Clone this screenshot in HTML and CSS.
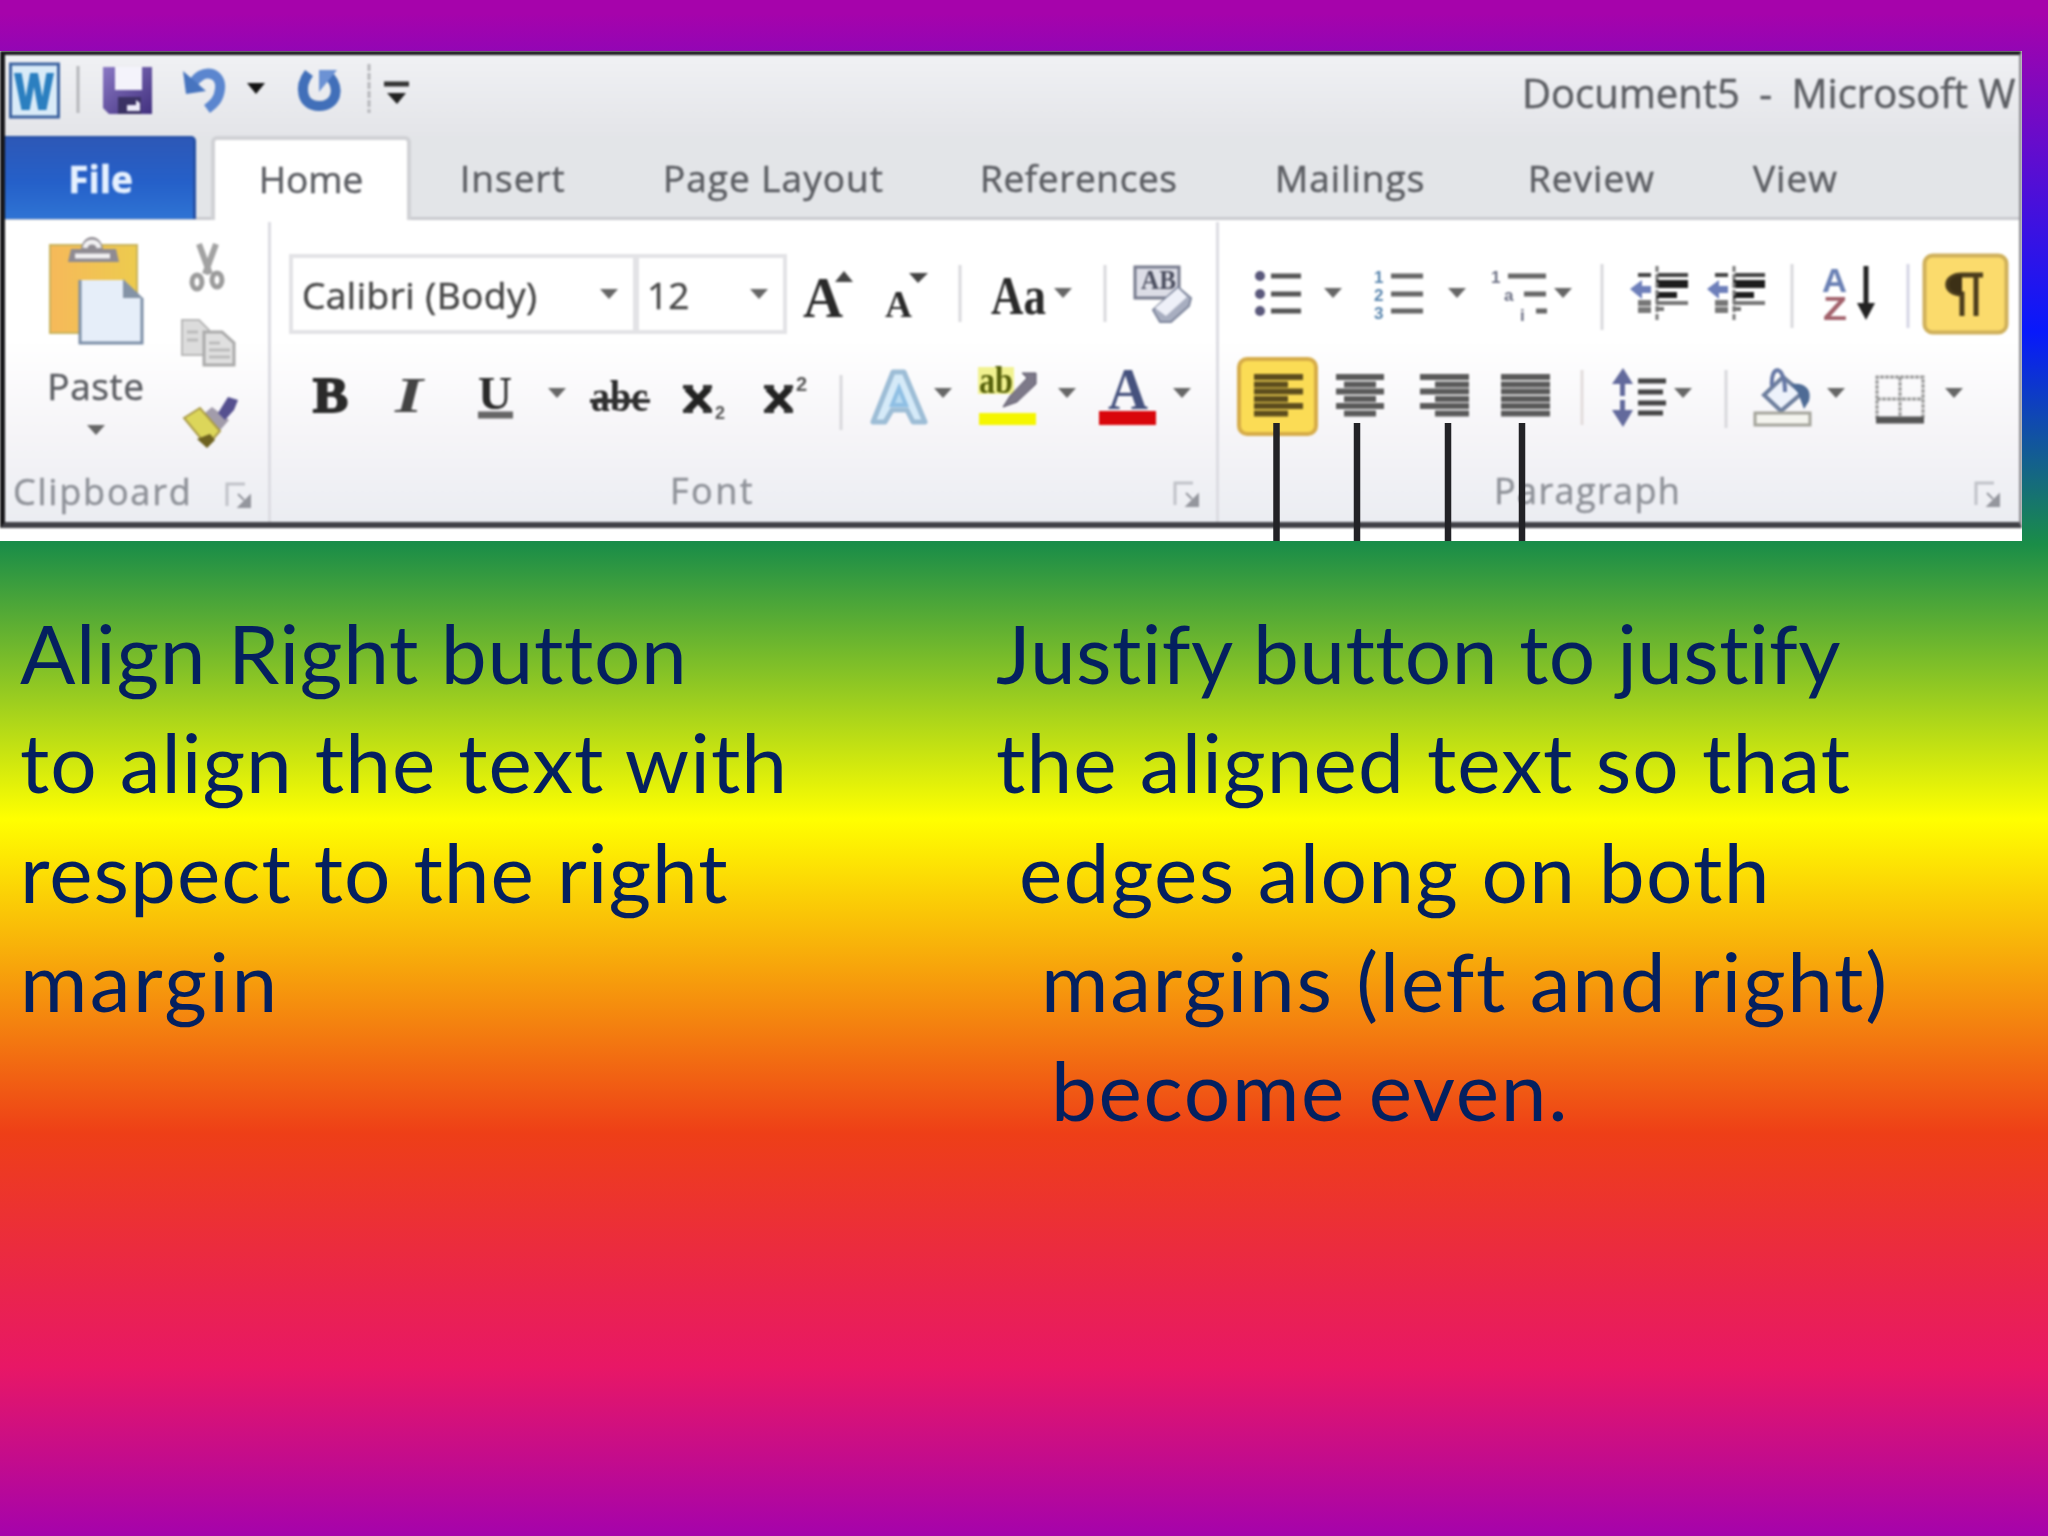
FILE: index.html
```html
<!DOCTYPE html>
<html lang="en">
<head>
<meta charset="utf-8">
<title>Paragraph alignment buttons</title>
<link rel="stylesheet" href="styles.css">
</head>
<body>
<svg class="defs" width="0" height="0" aria-hidden="true">
  <defs>
    <symbol id="arrow" viewBox="0 0 20 90"><path d="M1 38H19L10 48Z" fill="#666"/></symbol>
    <symbol id="launcher" viewBox="0 0 28 26"><path d="M2 24V2H20" fill="none" stroke="#c0c2c8" stroke-width="3"/><path d="M13 12L19 18M25 14V25H14Z" fill="#94969d" stroke="#94969d" stroke-width="2"/></symbol>
    <linearGradient id="gold" x1="0" y1="0" x2="1" y2="0"><stop offset="0" stop-color="#f6b95a"/><stop offset="1" stop-color="#edcb4e"/></linearGradient>
    <linearGradient id="violet" x1="0" y1="0" x2="1" y2="1"><stop offset="0" stop-color="#8a78c4"/><stop offset="1" stop-color="#41307e"/></linearGradient>
  </defs>
</svg>
<main class="slide">
  <section class="shot">
    <div class="window">
      <header class="titlebar">
        <div class="quick">
          <svg width="52" height="80" viewBox="9 55 52 80"><rect x="10.500" y="64" width="48" height="53" fill="#d9ebf8" stroke="#3b629f" stroke-width="3"/><text x="34" y="109" class="wlogo" text-anchor="middle" textLength="38" lengthAdjust="spacingAndGlyphs">W</text></svg>
          <svg width="4" height="80" viewBox="76 55 4 80"><path d="M78 66V113" stroke="#b5b6ba" stroke-width="3"/></svg>
          <svg width="50" height="80" viewBox="103 55 50 80"><path d="M103 67H152V114H109L103 108Z" fill="url(#violet)"/><rect x="115" y="67" width="27" height="23" fill="#f4f3fb"/><rect x="118" y="97" width="23" height="17" fill="#3b3264"/><path d="M127 111V105H136V100L140 103V111Z" fill="#eceaf8"/></svg>
          <svg width="44" height="80" viewBox="183 55 44 80"><path d="M193 84C201 68 222 71 220 89C219 99 214 104 207 109" fill="none" stroke="#5b86cf" stroke-width="10"/><path d="M183 71L186 94L206 91Z" fill="#4774bf"/></svg>
          <svg width="20" height="80" viewBox="246 55 20 80"><path d="M247 83H265L256 94Z" fill="#141414"/></svg>
          <svg width="44" height="80" viewBox="298 55 44 80"><path d="M309 73C299 86 301 106 319 106C337 106 340 88 330 77" fill="none" stroke="#416fb9" stroke-width="10"/><path d="M319 92V70H337Z" fill="#6c92d4"/></svg>
          <svg width="4" height="80" viewBox="367 55 4 80"><path d="M369 64V113" stroke="#b5b6ba" stroke-width="3" stroke-dasharray="7 2"/></svg>
          <svg width="26" height="80" viewBox="384 55 26 80"><path d="M384 84H409" stroke="#333" stroke-width="5"/><path d="M387 93H406L397 104Z" fill="#222"/></svg>
        </div>
        <div class="title">Document5 <span class="dash">-</span> Microsoft W</div>
      </header>
      <nav class="tabs">
        <div class="file"><span>File</span></div>
        <div class="home"><span>Home</span></div>
        <div class="others">
          <span>Insert</span><span>Page Layout</span><span class="t-ref">References</span><span>Mailings</span><span>Review</span><span>View</span>
        </div>
      </nav>
      <div class="ribbon">
        <section class="group clipboard">
          <div class="clip-body">
            <div class="paste">
              <svg width="96" height="112" viewBox="48 236 96 112"><path d="M50 245H137V333H50Z" fill="url(#gold)" stroke="#c9b45e" stroke-width="2"/><path d="M68 262L71 249H81C83 233 101 233 103 249H116L119 262Z" fill="#8f8b92"/><path d="M75 256H110M85 248C86 240 98 240 99 248" fill="none" stroke="#f1f0f2" stroke-width="5"/><path d="M80 280H124L141 298V343H80Z" fill="#e6eef9"/><path d="M80 280V343H142V298" fill="none" stroke="#7d8fa8" stroke-width="3"/><path d="M123 279V298H143Z" fill="#8493a6"/></svg>
              <span class="paste-text">Paste</span>
              <svg width="20" height="12" viewBox="0 36 20 12"><use href="#arrow" width="20" height="90"/></svg>
            </div>
            <div class="clip-tools">
              <svg width="60" height="52" viewBox="180 242 60 52"><path d="M199 244L210 274M216 244L205 274" stroke="#a2a2a2" stroke-width="6"/><ellipse cx="197" cy="282" rx="5" ry="7" fill="none" stroke="#9b9b9b" stroke-width="5"/><ellipse cx="217" cy="280" rx="5" ry="7" fill="none" stroke="#9b9b9b" stroke-width="5"/></svg>
              <svg width="60" height="52" viewBox="180 317 60 52"><path d="M182 320H199L209 330V355H182Z" fill="#dcdcdc" stroke="#b8b8b8" stroke-width="2"/><path d="M204 332H222L234 343V365H204Z" fill="#e0e0e0" stroke="#aaa" stroke-width="3"/><path d="M209 343H220M209 350H230M209 357H230M187 332H198M187 340H198" stroke="#bbb" stroke-width="3"/></svg>
              <svg width="60" height="58" viewBox="180 393 60 58"><path d="M212 407L229 420L216 435L199 418Z" fill="#a29cab"/><path d="M218 413L228 397L238 400L234 410L225 420Z" fill="#55508f"/><path d="M184 418L200 408L220 431L207 446Z" fill="#dcd65a" stroke="#aa9b48" stroke-width="2"/><path d="M197 439L210 434L215 440L207 448Z" fill="#6e6220"/></svg>
            </div>
          </div>
          <footer class="label"><span class="l-clip">Clipboard</span><svg width="28" height="26"><use href="#launcher"/></svg></footer>
        </section>

        <section class="group font">
          <div class="row font-row1">
            <div class="combos">
              <div class="combo name"><span>Calibri (Body)</span><svg width="20" height="70" viewBox="0 8 20 70"><use href="#arrow" width="20" height="90"/></svg></div>
              <div class="combo size"><span>12</span><svg width="20" height="70" viewBox="0 8 20 70"><use href="#arrow" width="20" height="90"/></svg></div>
            </div>
            <svg width="52" height="90" viewBox="803 250 52 90"><text x="803" y="317" class="ser" font-size="57" textLength="40" lengthAdjust="spacingAndGlyphs">A</text><path d="M835 282L844 271L853 282Z" fill="#444"/></svg>
            <svg width="46" height="90" viewBox="885 250 46 90"><text x="885" y="317" class="ser" font-size="38" textLength="27" lengthAdjust="spacingAndGlyphs">A</text><path d="M909 273H928L918 283Z" fill="#444"/></svg>
            <svg width="4" height="90" viewBox="958 250 4 90"><path d="M960 265V322" stroke="#d8d8dc" stroke-width="3"/></svg>
            <svg width="56" height="90" viewBox="991 250 56 90"><text x="991" y="314" class="ser" font-size="54" textLength="55" lengthAdjust="spacingAndGlyphs">Aa</text></svg>
            <svg width="20" height="90"><use href="#arrow"/></svg>
            <svg width="4" height="90" viewBox="1103 250 4 90"><path d="M1105 265V322" stroke="#d8d8dc" stroke-width="3"/></svg>
            <svg width="60" height="90" viewBox="1133 250 60 90"><path d="M1135 267H1179V298H1135Z" fill="#dcdde6" stroke="#777b8d" stroke-width="3"/><text x="1141" y="289" class="ser eb" font-size="27" textLength="35" lengthAdjust="spacingAndGlyphs">AB</text><path d="M1153 310L1178 287L1191 298L1189 306L1171 322H1160Z" fill="#a8aec0" stroke="#7e869c" stroke-width="2"/><path d="M1155 308L1178 288L1187 297L1166 316Z" fill="#eef0f8"/></svg>
          </div>
          <div class="row font-row2">
            <svg width="36" height="90" viewBox="313 350 36 90"><text x="313" y="412" class="ser heavy" font-size="50" textLength="35" lengthAdjust="spacingAndGlyphs">B</text></svg>
            <svg width="36" height="90" viewBox="394 350 36 90"><text x="395" y="412" class="ser it" font-size="50" textLength="28" lengthAdjust="spacingAndGlyphs">I</text></svg>
            <svg width="36" height="90" viewBox="478 350 36 90"><text x="478" y="409" class="ser" font-size="46" textLength="34" lengthAdjust="spacingAndGlyphs">U</text><path d="M478 415H513" stroke="#666" stroke-width="7"/></svg>
            <svg width="20" height="90"><use href="#arrow"/></svg>
            <svg width="60" height="90" viewBox="590 350 60 90"><text x="591" y="411" class="ser" font-size="44" textLength="57" lengthAdjust="spacingAndGlyphs">abc</text><path d="M590 401H650" stroke="#333" stroke-width="4"/></svg>
            <svg width="46" height="90" viewBox="683 350 46 90"><path d="M687 388L709 411M709 388L687 411" stroke="#222" stroke-width="7"/><path d="M683 387H693M703 387H712M683 411H693M703 411H712" stroke="#333" stroke-width="4"/><text x="715" y="419" class="san" font-size="18">2</text></svg>
            <svg width="50" height="90" viewBox="763 350 50 90"><path d="M768 388L790 411M790 388L768 411" stroke="#222" stroke-width="7"/><path d="M764 387H774M784 387H793M764 411H774M784 411H793" stroke="#333" stroke-width="4"/><text x="796" y="391" class="san" font-size="20">2</text></svg>
            <svg width="4" height="90" viewBox="839 350 4 90"><path d="M841 375V430" stroke="#d8d8dc" stroke-width="3"/></svg>
            <svg width="56" height="90" viewBox="871 350 56 90"><path d="M873 422L893 372H904L925 422H913L907 410H892L885 422Z" fill="#d5eaf8" stroke="#9dbdd6" stroke-width="5" stroke-linejoin="round"/><path d="M899 388L906 405H892Z" fill="#b9dbf2" stroke="#8fbfe4" stroke-width="4"/></svg>
            <svg width="20" height="90"><use href="#arrow"/></svg>
            <svg width="60" height="90" viewBox="978 350 60 90"><path d="M978 367H1014V394H978Z" fill="#f1f290"/><text x="979" y="393" class="ser hl" font-size="37" textLength="34" lengthAdjust="spacingAndGlyphs">ab</text><path d="M1003 407L1010 396L1027 378L1022 373H1036V384L1017 402Z" fill="#7d7989" stroke="#555063" stroke-width="1"/><rect x="979" y="413" width="57" height="12" fill="#f5f600"/></svg>
            <svg width="20" height="90"><use href="#arrow"/></svg>
            <svg width="60" height="90" viewBox="1098 350 60 90"><text x="1108" y="409" class="ser fc" font-size="60" textLength="40" lengthAdjust="spacingAndGlyphs">A</text><rect x="1099" y="411" width="57" height="14" fill="#d9060b"/></svg>
            <svg width="20" height="90"><use href="#arrow"/></svg>
          </div>
          <footer class="label"><span class="l-font">Font</span><svg width="28" height="26"><use href="#launcher"/></svg></footer>
        </section>

        <section class="group para">
          <div class="row para-row1">
            <svg width="48" height="90" viewBox="1254 250 48 90"><g fill="#5a587b"><circle cx="1260" cy="276" r="5"/><circle cx="1260" cy="294" r="5"/><circle cx="1260" cy="311" r="5"/></g><path d="M1271 276H1301M1271 294H1301M1271 311H1301" stroke="#555" stroke-width="5"/></svg>
            <svg width="20" height="90"><use href="#arrow"/></svg>
            <svg width="54" height="90" viewBox="1371 250 54 90"><g class="num"><text x="1374" y="283">1</text><text x="1374" y="301">2</text><text x="1374" y="319">3</text></g><path d="M1391 276H1423M1391 294H1423M1391 311H1423" stroke="#666" stroke-width="5"/></svg>
            <svg width="20" height="90"><use href="#arrow"/></svg>
            <svg width="58" height="90" viewBox="1490 250 58 90"><g class="num dim"><text x="1491" y="283">1</text><text x="1504" y="301">a</text><text x="1520" y="321">i</text></g><path d="M1508 276H1546M1524 294H1546M1536 311H1547" stroke="#666" stroke-width="5"/></svg>
            <svg width="20" height="90"><use href="#arrow"/></svg>
            <svg width="4" height="90" viewBox="1600 250 4 90"><path d="M1602 264V330" stroke="#d8d8dc" stroke-width="3"/></svg>
            <svg width="60" height="90" viewBox="1630 250 60 90"><g id="dent"><path d="M1630 289L1642 280V286H1651V293H1642V299Z" fill="#6e7fba"/><path d="M1638 275H1651M1658 275H1688" stroke="#444" stroke-width="4"/><path d="M1656 284H1688" stroke="#1d1d1d" stroke-width="8"/><path d="M1656 295H1677" stroke="#1d1d1d" stroke-width="6"/><path d="M1656 303H1688M1656 309H1664" stroke="#777" stroke-width="4"/><path d="M1638 303H1651M1638 310H1651" stroke="#777" stroke-width="6"/><path d="M1657 266V321" stroke="#777" stroke-width="3" stroke-dasharray="6 2"/></g></svg>
            <svg width="60" height="90" viewBox="1630 250 60 90"><use href="#dent"/></svg>
            <svg width="4" height="90" viewBox="1790 250 4 90"><path d="M1792 264V328" stroke="#d8d8dc" stroke-width="3"/></svg>
            <svg width="54" height="90" viewBox="1822 250 54 90"><text x="1822" y="292" class="san az" font-size="33" textLength="25" lengthAdjust="spacingAndGlyphs">A</text><text x="1823" y="320" class="san za" font-size="33" textLength="24" lengthAdjust="spacingAndGlyphs">Z</text><path d="M1866 266V305" stroke="#222" stroke-width="5"/><path d="M1857 303H1875L1866 320Z" fill="#222"/></svg>
            <svg width="4" height="90" viewBox="1906 250 4 90"><path d="M1908 264V328" stroke="#d5d5e4" stroke-width="3"/></svg>
            <svg width="88" height="90" viewBox="1922 250 88 90"><rect x="1924.500" y="255.500" width="82" height="77" rx="8" fill="#fbdb6c" stroke="#cfb05a" stroke-width="4"/><path d="M1983 275H1962C1943 275 1943 294 1962 294V316M1976 275V316" fill="none" stroke="#4b3d1c" stroke-width="5"/><path d="M1962 275C1945 275 1945 294 1962 294Z" fill="#3c3016"/></svg>
          </div>
          <div class="row para-row2">
            <svg width="82" height="90" viewBox="1237 350 82 90"><rect x="1239" y="359" width="77" height="75" rx="8" fill="#fbdc55" stroke="#d6ac48" stroke-width="4"/><path d="M1254 377H1303M1254 384.500H1288M1254 391.500H1303M1254 399H1288M1254 406H1303M1254 413.500H1288" stroke="#5d4d1d" stroke-width="5.800"/></svg>
            <svg width="52" height="90" viewBox="1335 350 52 90"><path d="M1336 377H1384M1344 384.500H1376M1336 391.500H1384M1344 399H1376M1336 406H1384M1344 413.500H1376" stroke="#5a5a5a" stroke-width="5.800"/></svg>
            <svg width="52" height="90" viewBox="1420 350 52 90"><path d="M1420 377H1469M1435 384.500H1469M1420 391.500H1469M1435 399H1469M1420 406H1469M1435 413.500H1469" stroke="#5a5a5a" stroke-width="5.800"/></svg>
            <svg width="52" height="90" viewBox="1500 350 52 90"><path d="M1501 377H1550M1501 384.500H1550M1501 391.500H1550M1501 399H1550M1501 406H1550M1501 413.500H1550" stroke="#5a5a5a" stroke-width="5.800"/></svg>
            <svg width="4" height="90" viewBox="1580 350 4 90"><path d="M1582 370V425" stroke="#e2dcdc" stroke-width="3"/></svg>
            <svg width="58" height="90" viewBox="1611 350 58 90"><path d="M1623 368L1633 384H1625V396H1620V384H1612ZM1623 427L1612 410H1620V400H1625V410H1633Z" fill="#636a9c"/><path d="M1638 381H1666M1638 392H1663M1638 403H1666M1638 413H1663" stroke="#444" stroke-width="5"/></svg>
            <svg width="20" height="90"><use href="#arrow"/></svg>
            <svg width="4" height="90" viewBox="1724 350 4 90"><path d="M1726 370V428" stroke="#d8d8dc" stroke-width="3"/></svg>
            <svg width="60" height="90" viewBox="1753 350 60 90"><path d="M1764 395L1783 377L1802 393L1781 411Z" fill="#edf2fb" stroke="#6d7e9d" stroke-width="4"/><path d="M1772 386C1770 365 1785 363 1785 392" fill="none" stroke="#6678a5" stroke-width="4"/><path d="M1791 384C1806 382 1812 390 1809 401L1804 409L1798 393Z" fill="#4e6b95"/><rect x="1755" y="413" width="55" height="12" fill="#f4f4ee" stroke="#a4a49b" stroke-width="3"/></svg>
            <svg width="20" height="90"><use href="#arrow"/></svg>
            <svg width="50" height="90" viewBox="1875 350 50 90"><path d="M1877 419V377H1923V419M1900 377V419M1877 399H1923" fill="none" stroke="#999" stroke-width="3" stroke-dasharray="4 1"/><path d="M1876 420H1924" stroke="#555" stroke-width="7"/></svg>
            <svg width="20" height="90"><use href="#arrow"/></svg>
          </div>
          <footer class="label"><span class="l-para">Paragraph</span><svg width="28" height="26"><use href="#launcher"/></svg></footer>
        </section>
      </div>
    </div>
    <svg class="callouts" width="260" height="118" viewBox="1270 423 260 118"><path d="M1276.500 423V541M1357 423V541M1448 423V541M1522 423V541" stroke="#222226" stroke-width="6.500"/></svg>
  </section>

  <section class="notes">
    <p class="left">
      <span class="l1">Align Right button</span>
      <span class="l2">to align the text with</span>
      <span class="l3">respect to the right</span>
      <span class="l4">margin</span>
    </p>
    <p class="right">
      <span class="r1">Justify button to justify</span>
      <span class="r2">the aligned text so that</span>
      <span class="r3">edges along on both</span>
      <span class="r4">margins (left and right)</span>
      <span class="r5">become even.</span>
    </p>
  </section>
</main>
</body>
</html>
```
FILE: styles.css
```css
* { box-sizing: border-box; }
body { margin: 0; }
.defs { position: absolute; }
svg { display: block; overflow: visible; }

.slide {
  width: 2048px;
  height: 1536px;
  overflow: hidden;
  padding-top: 51px;
  background: linear-gradient(#a603ab 14px, #0819fb 332px, #1a8d48 544px, #ff0 819px, #ee3f17 1133px, #e81766 1367px, #a603ab 1534px);
}

/* Ribbon picture */
.shot {
  position: relative;
  width: 2022px;
  height: 490px;
  overflow: hidden;
  background: #fff;
  font-family: "Open Sans", "Noto Sans", sans-serif;
  color: #5c5e63;
  -webkit-text-stroke: 0.5px;
}
.window {
  height: 477px;
  border: solid #17171a;
  border-width: 4px 3px 6px 5px;
  border-right-color: #929297;
  border-bottom-color: #404046;
  background: #fff;
  filter: blur(1.1px);
}
.titlebar {
  display: flex;
  justify-content: space-between;
  height: 81px;
  background: linear-gradient(#f0f1f4, #e4e5e9);
}
.quick {
  display: grid;
  grid-template-columns: 67px 27px 80px 63px 52px 69px 17px 26px;
  padding-left: 4px;
}
.wlogo { font: bold 50px "Liberation Sans", sans-serif; fill: #2b7fc0; stroke: #2b7fc0; stroke-width: 2px; }
.title {
  width: 497px;
  overflow: hidden;
  white-space: pre;
  font-size: 40px;
  line-height: 75px;
}
.dash { margin: 0 9px; }

.tabs {
  display: flex;
  height: 84px;
  font-size: 37px;
  line-height: 84px;
  background: #e3e5e8;
  box-shadow: inset 0 -3px #c9cacf;
}
.file {
  width: 191px;
  height: 83px;
  padding-left: 3px;
  text-align: center;
  font-weight: bold;
  color: #e6f1ff;
  border: solid #2450a5;
  border-width: 2px 3px 0 0;
  line-height: 82px;
  background: linear-gradient(#2d58b7, #2560c9 55%, #2f74d4);
  border-radius: 0 5px 0 0;
}
.home {
  width: 200px;
  margin-left: 15px;
  text-align: center;
  background: #fff;
  border: 4px solid #d0d1d5;
  border-bottom: 0;
  border-radius: 6px 6px 0 0;
  line-height: 78px;
}
.others {
  display: grid;
  grid-template-columns: 203px 317px 295px 253px 225px 100px;
  padding-left: 49px;
  white-space: nowrap;
  letter-spacing: 1px;
}
.t-ref { letter-spacing: 0.6px; }

.ribbon {
  display: grid;
  grid-template-columns: 266px 948px 1fr;
  height: 302px;
  padding-top: 2px;
  background: linear-gradient(#fff 0, #fff 40%, #f6f5f8 70%, #ebedf2 100%);
}
.group { display: flex; flex-direction: column; justify-content: space-between; }
.clipboard, .font { border-right: 3px solid #dcdce2; }
.label {
  display: flex;
  align-items: center;
  height: 60px;
  font-size: 36px;
  line-height: 60px;
  color: #8f9299;
}
.label svg { margin-top: 5px; }
.clipboard .label { padding: 0 15px 0 8px; justify-content: space-between; }
.font .label { padding: 0 15px 0 399px; justify-content: space-between; }
.para .label { padding: 0 17px 0 275px; justify-content: space-between; }
.l-clip { letter-spacing: 1.8px; }
.l-font { letter-spacing: 2.5px; }
.l-para { letter-spacing: 1.4px; }

.clip-body { display: flex; padding: 14px 0 0 43px; }
.paste { display: flex; flex-direction: column; align-items: center; width: 96px; }
.paste-text { font-size: 37px; line-height: 54px; margin: 11px 0 10px; letter-spacing: 0.6px; }
.clip-tools { display: grid; grid-template-rows: 75px 76px 58px; margin: 6px 0 0 36px; }

.row { display: grid; height: 90px; justify-content: start; }
.font, .para { justify-content: flex-start; gap: 10px; padding-top: 28px; }
.font .label, .para .label { margin-top: 11px; }
.font-row1 { grid-template-columns: 514px 82px 73px 33px 62px 50px 30px 60px; padding-left: 18px; }
.font-row2 { grid-template-columns: 81px 84px 69px 43px 93px 80px 76px 32px 62px 45px 79px 41px 74px 20px; padding-left: 42px; }
.para-row1 { grid-template-columns: 69px 48px 76px 43px 63px 47px 30px 77px 83px 32px 84px 16px 88px; padding-left: 35px; }
.para-row2 { grid-template-columns: 98px 85px 80px 80px 31px 62px 51px 29px 73px 49px 69px 20px; padding-left: 18px; }

.combos { display: flex; height: 80px; margin-top: 4px; width: 498px; }
.combo {
  display: flex;
  align-items: center;
  justify-content: space-between;
  border: 4px solid #e3e3e6;
  background: #fff;
  color: #484848;
  font-size: 37px;
  white-space: nowrap;
}
.name { width: 348px; padding: 0 14px 0 9px; letter-spacing: 0.5px; }
.size { width: 150px; padding: 0 14px 0 8px; border-left-width: 2px; }

.ser { font-family: "Liberation Serif", serif; font-weight: bold; fill: #2a2a2a; }
.heavy { stroke: #2a2a2a; stroke-width: 2px; }
.eb { fill: #4c4f60; }
.it { font-style: italic; fill: #444; }
.san { font-family: "Liberation Sans", sans-serif; font-weight: bold; fill: #555; }
.hl { fill: #55600a; }
.fc { fill: #46527e; }
.az { fill: #6a80b4; }
.za { fill: #a2616b; }
.num { font: bold 17px "Liberation Sans", sans-serif; fill: #5784ad; }
.dim { fill: #6c7084; }

.callouts { position: absolute; left: 1270px; top: 372px; filter: blur(0.7px); }

/* Notes under the ribbon */
.notes {
  display: grid;
  grid-template-columns: 976px 1fr;
  padding: 57px 0 0 20px;
  font: 82px/109.3px Lato, sans-serif;
  font-variant-ligatures: none;
  color: #04205f;
}
.notes p { margin: 0; }
.notes span { display: block; width: max-content; white-space: nowrap; }
.l1 { letter-spacing: 0.7px; }
.l2, .l3 { letter-spacing: 1px; }
.l4 { letter-spacing: 2.4px; }
.r1 { letter-spacing: 0.4px; }
.r2 { letter-spacing: 1.1px; }
.r3 { letter-spacing: 1.3px; margin-left: 23px; }
.r4 { letter-spacing: 1.7px; margin-left: 45px; }
.r5 { letter-spacing: 1.7px; margin-left: 55px; }
```
